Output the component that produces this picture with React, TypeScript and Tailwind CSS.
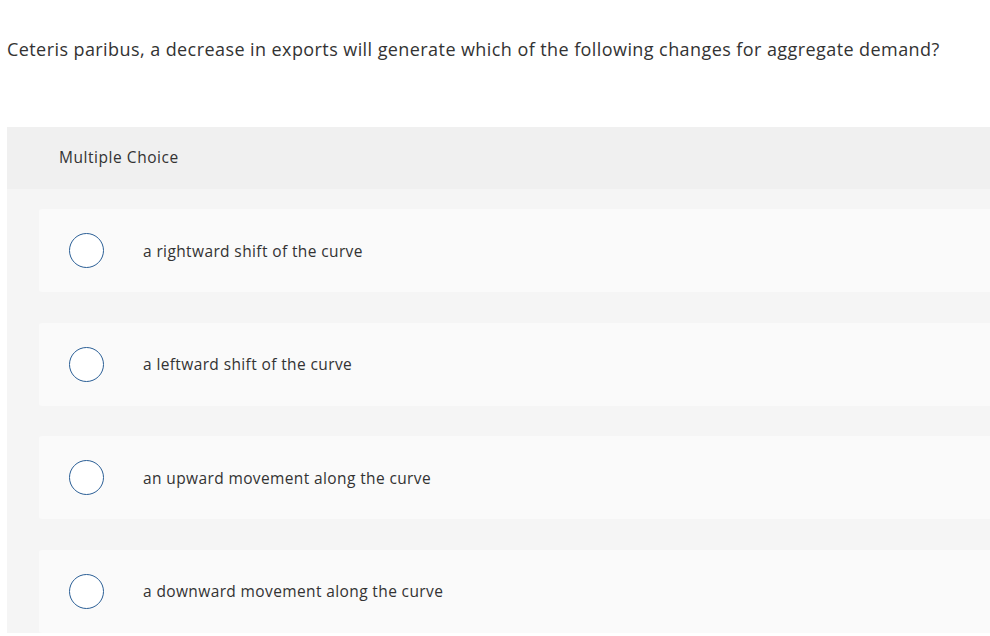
import React from 'react';

const options = [
  'a rightward shift of the curve',
  'a leftward shift of the curve',
  'an upward movement along the curve',
  'a downward movement along the curve',
];

export default function App() {
  return (
    <div className="min-h-screen bg-white text-[#333] font-['Open_Sans',sans-serif] overflow-hidden">
      <div className="pl-[7px] pt-[37px] h-[127px]">
        <p className="text-[18px] leading-[24px] tracking-[0.42px]">
          Ceteris paribus, a decrease in exports will generate which of the following changes for aggregate demand?
        </p>
      </div>

      <div className="ml-[7px]">
        <div className="h-[62px] bg-[#f0f0f0] pl-[52px] flex items-center">
          <span className="text-[15.5px] tracking-[0.55px]">Multiple Choice</span>
        </div>
        <div className="bg-[#f5f5f5] pl-[32px] pt-[20px] flex flex-col gap-[30.5px]">
          {options.map((opt) => (
            <div
              key={opt}
              className="h-[83px] bg-[#fafafa] rounded-l-[3px] flex items-center"
            >
              <span className="ml-[30px] w-[35px] h-[35px] rounded-full border-[1.5px] border-[#2b5f96] bg-white shrink-0" />
              <span className="ml-[39px] pt-[2px] text-[15.5px] tracking-[0.38px]">{opt}</span>
            </div>
          ))}
        </div>
      </div>
    </div>
  );
}
